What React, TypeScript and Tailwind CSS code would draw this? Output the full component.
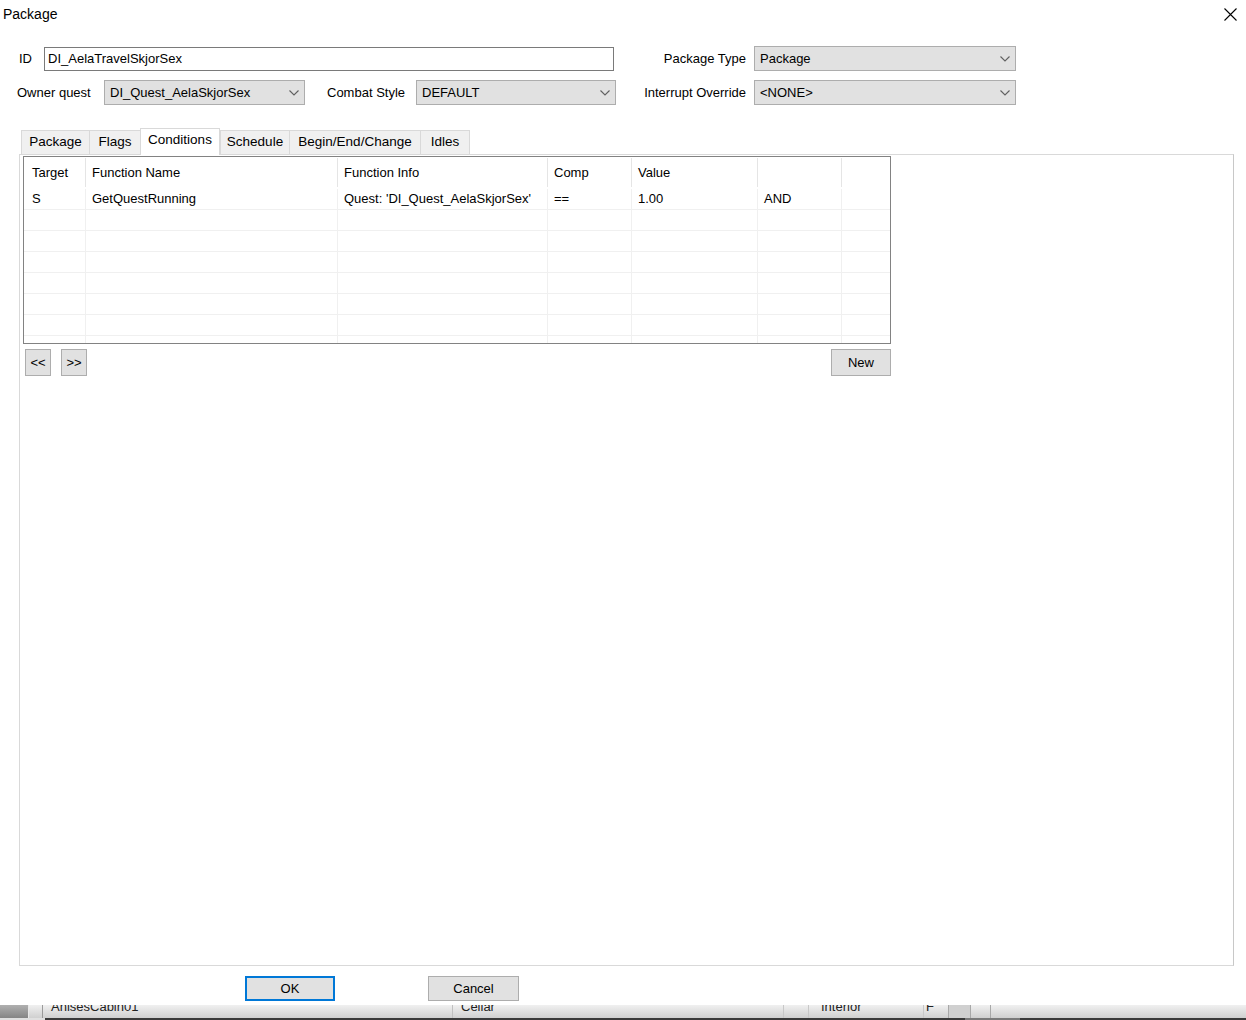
import React from "react";

const Chevron = () => (
  <svg width="10" height="6" viewBox="0 0 10 6" className="shrink-0">
    <polyline points="0.5,0.5 5,5 9.5,0.5" fill="none" stroke="#606060" strokeWidth="1.1" />
  </svg>
);

const Combo = ({ value, width }: { value: string; width: string }) => (
  <div
    className={`${width} h-[25px] flex items-center justify-between bg-[#e1e1e1] border border-[#adadad] pl-[5px] pr-[5px]`}
  >
    <span>{value}</span>
    <Chevron />
  </div>
);

const tabs = [
  { label: "Package", w: "w-[68px]" },
  { label: "Flags", w: "w-[51px]" },
  { label: "Conditions", w: "w-[80px]", active: true },
  { label: "Schedule", w: "w-[69px]" },
  { label: "Begin/End/Change", w: "w-[131px]" },
  { label: "Idles", w: "w-[50px]" },
];

const cols = "grid grid-cols-[62px_252px_210px_84px_126px_84px_1fr]";

const headers = ["Target", "Function Name", "Function Info", "Comp", "Value", "", ""];
const firstRow = ["S", "GetQuestRunning", "Quest: 'DI_Quest_AelaSkjorSex'", "==", "1.00", "AND", ""];

const ConditionList = () => (
  <div className="ml-[3px] mt-[1px] w-[868px] h-[188px] border border-[#828282] overflow-hidden bg-white">
    <div className={`${cols} h-[32px]`}>
      {headers.map((h, i) => (
        <div key={i} className="flex items-center pt-[1px] pb-[2px]">
          <div
            className={`flex-1 h-full flex items-center ${i === 0 ? "pl-[8px]" : "pl-[6px]"} ${
              i < 6 ? "border-r border-[#e5e5e5]" : ""
            }`}
          >
            {h}
          </div>
        </div>
      ))}
    </div>
    {Array.from({ length: 8 }).map((_, r) => (
      <div key={r} className={`${cols} h-[21px]`}>
        {(r === 0 ? firstRow : headers.map(() => "")).map((c, i) => (
          <div
            key={i}
            className={`h-[21px] flex items-center border-b border-[#f0f0f0] whitespace-nowrap ${
              i === 0 ? "pl-[8px]" : "pl-[6px]"
            } ${i < 6 ? "border-r" : ""}`}
          >
            {c}
          </div>
        ))}
      </div>
    ))}
  </div>
);

const SmallButton = ({ children, className = "" }: { children: React.ReactNode; className?: string }) => (
  <div
    className={`h-[27px] flex items-center justify-center bg-[#e1e1e1] border border-[#adadad] ${className}`}
  >
    {children}
  </div>
);

export default function App() {
  return (
    <div className="h-screen w-full bg-white flex flex-col overflow-hidden text-[13px] text-black font-['Liberation_Sans',Arial,sans-serif]">
      {/* title bar */}
      <div className="h-[27px] shrink-0 flex items-center justify-between pl-[3px] pr-[9px] pt-[1px]">
        <span className="text-[14px]">Package</span>
        <svg width="13" height="13" viewBox="0 0 13 13">
          <path d="M0.5 0.5 L12.5 12.5 M12.5 0.5 L0.5 12.5" stroke="#000" strokeWidth="1.1" />
        </svg>
      </div>

      {/* ID row */}
      <div className="mt-[19px] h-[25px] flex items-center shrink-0">
        <div className="w-[44px] pl-[19px]">ID</div>
        <div className="w-[570px] h-[24px] border border-[#7a7a7a] flex items-center pl-[3px]">
          DI_AelaTravelSkjorSex
        </div>
        <div className="w-[140px] text-right pr-[8px]">Package Type</div>
        <Combo value="Package" width="w-[262px]" />
      </div>

      {/* owner row */}
      <div className="mt-[9px] h-[25px] flex items-center shrink-0">
        <div className="w-[104px] pl-[17px]">Owner quest</div>
        <Combo value="DI_Quest_AelaSkjorSex" width="w-[201px]" />
        <div className="w-[111px] pl-[22px]">Combat Style</div>
        <Combo value="DEFAULT" width="w-[200px]" />
        <div className="w-[138px] text-right pr-[8px]">Interrupt Override</div>
        <Combo value="<NONE>" width="w-[262px]" />
      </div>

      {/* tabs */}
      <div className="mt-[23px] h-[26px] flex items-end pl-[21px] shrink-0 relative z-10">
        {tabs.map((t, i) => (
          <div
            key={t.label}
            className={`${t.w} flex items-center justify-center border-t border-l border-[#d9d9d9] text-[13.5px] ${
              i === tabs.length - 1 ? "border-r" : ""
            } ${
              t.active
                ? "h-[27px] bg-white border-r -mb-[1px] pb-[4px]"
                : "h-[24px] bg-[#f0f0f0]"
            }`}
          >
            {t.label}
          </div>
        ))}
      </div>

      {/* tab panel */}
      <div className="ml-[19px] w-[1215px] h-[812px] shrink-0 border border-[#d9d9d9] border-r-[#c8c8c8] bg-white">
        <ConditionList />
        <div className="mt-[5px] ml-[5px] w-[866px] flex items-center">
          <SmallButton className="w-[26px]">&lt;&lt;</SmallButton>
          <SmallButton className="w-[26px] ml-[10px]">&gt;&gt;</SmallButton>
          <SmallButton className="w-[60px] ml-auto">New</SmallButton>
        </div>
      </div>

      {/* dialog buttons */}
      <div className="mt-[10px] h-[25px] flex shrink-0">
        <div className="ml-[245px] w-[90px] h-[25px] flex items-center justify-center bg-[#e1e1e1] border-2 border-[#0078d7]">
          OK
        </div>
        <div className="ml-[93px] w-[91px] h-[25px] flex items-center justify-center bg-[#e1e1e1] border border-[#adadad]">
          Cancel
        </div>
      </div>

      <div className="flex-1" />

      {/* window behind, peeking out below the dialog */}
      <div className="h-[15px] shrink-0 flex flex-col overflow-hidden">
        <div className="flex-1 flex bg-gradient-to-b from-[#f0f0f0] to-[#d0d0d0] text-[13px] text-[#222] leading-none overflow-hidden">
          <div className="w-[28px] bg-gradient-to-b from-[#b0b0b0] to-[#858585]" />
          <div className="w-[15px] border-l border-[#e8e8e8] border-r border-r-[#9a9a9a]" />
          <div className="w-[410px] pl-[8px] -mt-[5px] border-r border-[#c0c0c0]">AnisesCabin01</div>
          <div className="w-[330px] pl-[8px] -mt-[5px]">Cellar</div>
          <div className="w-[25px] border-l border-[#c8c8c8]" />
          <div className="w-[115px] pl-[12px] -mt-[5px] border-l border-[#c8c8c8]">Interior</div>
          <div className="w-[25px] pl-[2px] -mt-[5px] border-l border-[#c8c8c8]">F</div>
          <div className="w-[22px] bg-[#d0d0d0] border-l border-[#a8a8a8]" />
          <div className="w-[20px] border-l border-[#a8a8a8]" />
          <div className="flex-1 border-l border-[#a8a8a8]" />
        </div>
        <div className="h-[2px] flex">
          <div className="w-[45px] bg-[#e0e0e0]" />
          <div className="w-[920px] bg-[#3a3a3a]" />
          <div className="w-[55px] bg-[#7a7a7a]" />
          <div className="flex-1 bg-[#3a3a3a]" />
        </div>
      </div>
    </div>
  );
}
